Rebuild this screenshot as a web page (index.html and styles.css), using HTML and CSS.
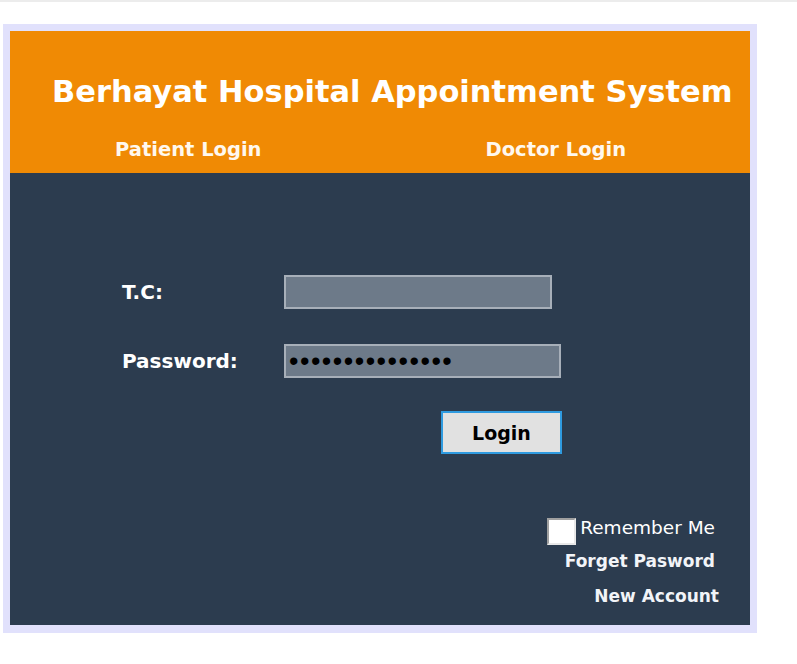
FILE: index.html
```html
<!DOCTYPE html>
<html>
<head>
<meta charset="utf-8">
<link rel="stylesheet" href="styles.css">
</head>
<body>
<div class="topline"></div>
<div class="frame">
  <div class="panel">
    <header class="header">
      <h1 class="title">Berhayat Hospital Appointment System</h1>
      <nav class="nav">
        <a class="nav-link nav-patient" href="#">Patient Login</a>
        <a class="nav-link nav-doctor" href="#">Doctor Login</a>
      </nav>
    </header>
    <main class="content">
      <form class="form">
        <div class="row">
          <label class="label" for="tc">T.C:</label>
          <input class="field field-tc" id="tc" type="text">
        </div>
        <div class="row row-pass">
          <label class="label" for="pw">Password:</label>
          <input class="field field-pw" id="pw" type="password" value="123456789012345">
        </div>
        <div class="row-btn">
          <button class="btn" type="button">Login</button>
        </div>
      </form>
      <div class="extras">
        <label class="remember"><span class="check"></span><span class="remember-text">Remember Me</span></label>
        <a class="extra-link forget" href="#">Forget Pasword</a>
        <a class="extra-link new" href="#">New Account</a>
      </div>
    </main>
  </div>
</div>
</body>
</html>
```
FILE: styles.css
```css
html, body {
  margin: 0;
  padding: 0;
  background: #ffffff;
  font-family: "DejaVu Sans", Verdana, sans-serif;
}
.topline {
  height: 2px;
  background: #ececec;
}
.frame {
  margin: 22px 0 0 3px;
  width: 740px;
  border: 7px solid #e1e1fc;
  border-bottom-width: 8px;
}
.panel {
  background: #2c3c4f;
  height: 594px;
  display: flex;
  flex-direction: column;
}
.header {
  background: #f08a04;
  height: 142px;
  box-sizing: border-box;
  padding-top: 43px;
}
.title {
  margin: 0 0 0 42px;
  color: #ffffff;
  font-size: 30.5px;
  font-weight: bold;
  line-height: 36px;
  white-space: nowrap;
}
.nav {
  display: flex;
  margin-top: 24px;
  height: 30px;
  align-items: center;
}
.nav-link {
  color: #fff8ee;
  font-weight: bold;
  font-size: 19.5px;
  text-decoration: none;
}
.nav-patient { margin-left: 105px; }
.nav-doctor { margin-left: 224px; }
.content {
  flex: 1;
  display: flex;
  flex-direction: column;
  padding-top: 102px;
}
.form {
  display: flex;
  flex-direction: column;
}
.row {
  display: flex;
  align-items: center;
  height: 34px;
}
.row-pass { margin-top: 35px; }
.label {
  width: 162px;
  padding-left: 112px;
  color: #ffffff;
  font-weight: bold;
  font-size: 20px;
}
.field {
  box-sizing: border-box;
  height: 34px;
  margin: 0;
  background: #6d7a89;
  border: 2px solid #a7afb9;
  color: #000;
  font-size: 16px;
  padding: 0 4px;
  outline: none;
}
.field-tc { width: 268px; }
.field-pw {
  width: 277px;
  font-size: 27px;
  letter-spacing: 1.5px;
  padding-left: 3px;
}
.row-btn {
  display: flex;
  margin-top: 33px;
  padding-left: 431px;
}
.btn {
  width: 121px;
  height: 43px;
  background: #e1e1e1;
  border: 2px solid #2f9be0;
  font-family: inherit;
  font-weight: bold;
  font-size: 19px;
  color: #000;
  padding: 0;
}
.extras {
  margin-top: 64px;
  display: flex;
  flex-direction: column;
  align-items: flex-end;
  padding-right: 34px;
}
.remember {
  display: flex;
  align-items: flex-start;
  margin-right: 1px;
}
.check {
  background: #fff;
  border: 2px solid #a0a0a0;
  border-right-color: #e8e8e8;
  border-bottom-color: #e8e8e8;
  box-sizing: content-box;
  margin-right: 4px;
  width: 25px;
  height: 23px;
}
.remember-text {
  color: #ffffff;
  font-size: 18.5px;
  line-height: 20px;
}
.extra-link {
  color: #f2f4f8;
  font-weight: bold;
  font-size: 17px;
  text-decoration: none;
}
.forget { margin-top: 6px; margin-right: 1px; }
.new { margin-top: 15px; margin-right: -3px; }
```
